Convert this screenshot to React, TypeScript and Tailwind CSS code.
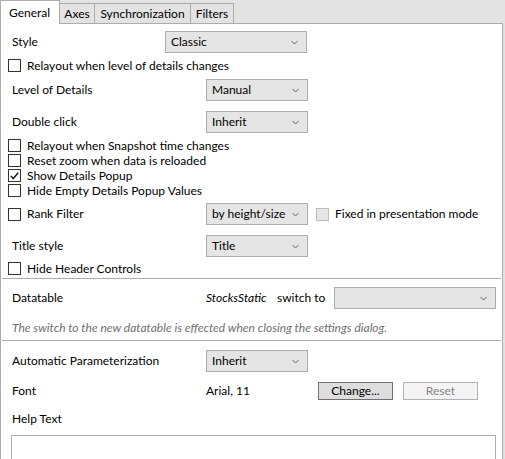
import type { ReactNode } from 'react';

function Chevron() {
  return (
    <svg width="7" height="5" viewBox="0 0 7 5" className="shrink-0">
      <path d="M0.5 1 L3.5 4 L6.5 1" fill="none" stroke="#606060" strokeWidth="1" />
    </svg>
  );
}

function Dropdown({ value, className = '' }: { value?: string; className?: string }) {
  return (
    <div
      className={`flex items-center justify-between h-[22px] border border-[#acacac] bg-[#e5e5e5] pl-[5px] pr-[8px] ${className}`}
    >
      <span>{value}</span>
      <Chevron />
    </div>
  );
}

function CheckBox({ checked = false, disabled = false }: { checked?: boolean; disabled?: boolean }) {
  return (
    <div
      className={`w-[13px] h-[13px] shrink-0 border flex items-center justify-center ${
        disabled ? 'border-[#bcbcbc] bg-[#e6e6e6]' : 'border-[#333333] bg-white'
      }`}
    >
      {checked && (
        <svg width="9" height="8" viewBox="0 0 9 8">
          <path d="M0.8 4 L3.3 6.6 L8.2 0.8" fill="none" stroke="#222" strokeWidth="1.6" />
        </svg>
      )}
    </div>
  );
}

function CheckRow({ label, checked, className = '' }: { label: string; checked?: boolean; className?: string }) {
  return (
    <div className={`flex items-center h-[15px] pl-[7px] gap-[6px] ${className}`}>
      <CheckBox checked={checked} />
      <span>{label}</span>
    </div>
  );
}

function LabelRow({ label, children, className = '' }: { label: string; children?: ReactNode; className?: string }) {
  return (
    <div className={`flex items-center h-[22px] ${className}`}>
      <span className="w-[205px] pl-[11px] shrink-0">{label}</span>
      {children}
    </div>
  );
}

export default function App() {
  return (
    <div
      className="w-[505px] h-[459px] overflow-hidden bg-[#e3e3e3] text-[12px] leading-none text-black"
      style={{ fontFamily: 'Lato, "Noto Sans", sans-serif' }}
    >
      {/* tabs */}
      <div className="flex items-end h-[24px] relative z-10">
        <div className="h-[24px] w-[60px] bg-white border border-b-0 border-[#acacac] flex items-center pl-[8px] pt-[1px]">
          General
        </div>
        <div className="h-[21px] w-[35px] border border-l-0 border-[#acacac] flex items-center justify-center">Axes</div>
        <div className="h-[21px] w-[96px] border border-l-0 border-[#acacac] flex items-center justify-center">
          Synchronization
        </div>
        <div className="h-[21px] w-[43px] border border-l-0 border-[#acacac] flex items-center justify-center">Filters</div>
      </div>

      {/* panel */}
      <div className="w-[503px] h-[440px] -mt-[1px] bg-white border border-[#acacac]">
        <LabelRow label="Style" className="pt-[7px] h-[29px]">
          <Dropdown value="Classic" className="w-[142px] -ml-[41px]" />
        </LabelRow>
        <CheckRow label="Relayout when level of details changes" className="mt-[5px]" />
        <LabelRow label="Level of Details" className="mt-[6px]">
          <Dropdown value="Manual" className="w-[102px]" />
        </LabelRow>
        <LabelRow label="Double click" className="mt-[10px]">
          <Dropdown value="Inherit" className="w-[102px]" />
        </LabelRow>
        <CheckRow label="Relayout when Snapshot time changes" className="mt-[5px]" />
        <CheckRow label="Reset zoom when data is reloaded" />
        <CheckRow label="Show Details Popup" checked />
        <CheckRow label="Hide Empty Details Popup Values" />
        <div className="flex items-center h-[22px] mt-[5px]">
          <div className="flex items-center w-[205px] shrink-0 pl-[7px] gap-[6px]">
            <CheckBox />
            <span>Rank Filter</span>
          </div>
          <Dropdown value="by height/size" className="w-[102px]" />
          <div className="ml-[8px] flex items-center gap-[6px]">
            <CheckBox disabled />
            <span>Fixed in presentation mode</span>
          </div>
        </div>
        <LabelRow label="Title style" className="mt-[10px]">
          <Dropdown value="Title" className="w-[102px]" />
        </LabelRow>
        <CheckRow label="Hide Header Controls" className="mt-[4px]" />
        <div className="mt-[2px] mx-[1px] border-t border-[#acacac]" />

        <div className="flex items-center h-[22px] mt-[8px]">
          <span className="w-[205px] shrink-0 pl-[11px]">Datatable</span>
          <span className="italic w-[71px]">StocksStatic</span>
          <span className="w-[57px]">switch to</span>
          <Dropdown className="w-[162px]" />
        </div>
        <div className="mt-[13px] pl-[11px] italic text-[#707070]">
          The switch to the new datatable is effected when closing the settings dialog.
        </div>
        <div className="mt-[6px] mx-[1px] border-t border-[#acacac]" />

        <LabelRow label="Automatic Parameterization" className="mt-[9px]">
          <Dropdown value="Inherit" className="w-[102px]" />
        </LabelRow>
        <div className="flex items-center h-[18px] mt-[10px]">
          <span className="w-[205px] shrink-0 pl-[11px]">Font</span>
          <span className="w-[112px]">Arial, 11</span>
          <div className="w-[75px] h-[18px] border border-[#707070] bg-[#dddddd] flex items-center justify-center">
            Change...
          </div>
          <div className="ml-[10px] w-[75px] h-[18px] border border-[#adb2b5] bg-[#f4f4f4] text-[#838383] flex items-center justify-center">
            Reset
          </div>
        </div>
        <div className="mt-[13px] pl-[11px]">Help Text</div>
        <div className="mt-[10px] ml-[10px] w-[485px] h-[60px] border border-[#abadb3]" />
      </div>
    </div>
  );
}
